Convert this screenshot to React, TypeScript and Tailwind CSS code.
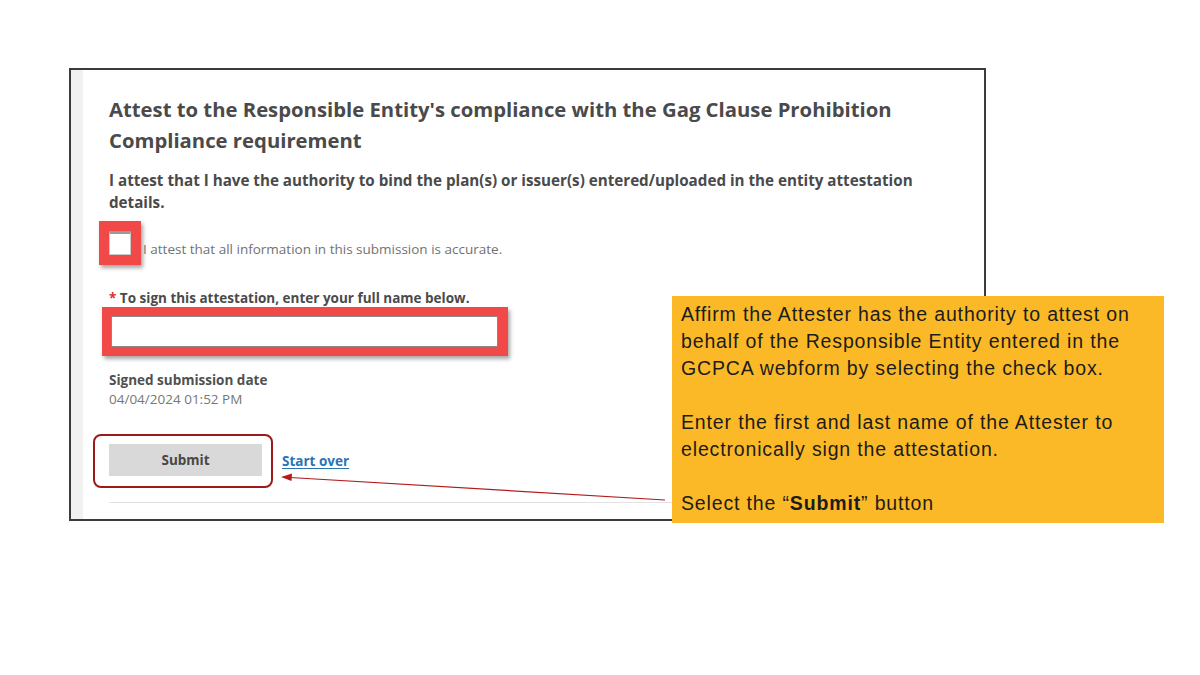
import React from 'react';

const Callout = () => (
    <div className="absolute left-[672px] top-[296px] w-[492px] h-[227px] bg-[#fbb927] pl-[9px] pt-[5px] text-[19.5px] leading-[27px] tracking-[0.85px] text-[#1c1c1c] font-['Liberation_Sans',sans-serif] whitespace-nowrap">
        <p>
            Affirm the Attester has the authority to attest on<br />
            behalf of the Responsible Entity entered in the<br />
            GCPCA webform by selecting the check box.
        </p>
        <p className="mt-[27px]">
            Enter the first and last name of the Attester to<br />
            electronically sign the attestation.
        </p>
        <p className="mt-[27px]">Select the “<span className="font-bold">Submit</span>” button</p>
    </div>
);

const Arrow = () => (
    <svg className="absolute left-0 top-0 pointer-events-none" width="1200" height="675" viewBox="0 0 1200 675">
        <line x1="665" y1="500" x2="290" y2="477.5" stroke="#b01c1c" strokeWidth="1.2" />
        <polygon points="281,477 292,473.5 291.5,481" fill="#b01c1c" />
    </svg>
);

export default function App() {
    return (
        <div className="relative w-[1200px] h-[675px] bg-white overflow-hidden pt-[68px] pl-[69px] font-['Open_Sans',sans-serif]">
            <div className="flex w-[917px] h-[453px] border-2 border-[#3b3b3b] bg-white">
                <div className="w-[12px] bg-[#f1f1f1] shrink-0" />
                <div className="flex-1 pl-[26px] pt-[24px]">
                    <h1 className="text-[20.3px] leading-[31px] font-bold text-[#4a4a4a] whitespace-nowrap">
                        Attest to the Responsible Entity's compliance with the Gag Clause Prohibition<br />
                        Compliance requirement
                    </h1>
                    <p className="mt-[13px] text-[15.2px] leading-[22px] font-bold text-[#4a4a4a] whitespace-nowrap">
                        I attest that I have the authority to bind the plan(s) or issuer(s) entered/uploaded in the entity attestation<br />
                        details.
                    </p>

                    <div className="flex items-start mt-[8px] -ml-[10px]">
                        <div className="w-[42px] h-[44px] bg-[#f14848] p-[10px] shadow-[2px_3px_4px_rgba(0,0,0,0.35)]">
                            <div className="w-full h-full bg-white border border-[#c8c8c8] border-t-[3px] border-t-[#9a9a9a]" />
                        </div>
                        <span className="pt-[19px] pl-[2px] text-[13.5px] leading-[18px] text-[#727272]">
                            I attest that all information in this submission is accurate.
                        </span>
                    </div>

                    <p className="mt-[24px] text-[13.5px] leading-[18px] font-bold text-[#4a4a4a]">
                        <span className="text-[#d9342b]">*</span> To sign this attestation, enter your full name below.
                    </p>
                    <div className="-ml-[7px] w-[406px] h-[49px] bg-[#f14848] p-[9px] pr-[10px] shadow-[2px_3px_4px_rgba(0,0,0,0.35)]">
                        <div className="w-full h-full bg-white border border-[#8a8a8a]" />
                    </div>

                    <p className="mt-[15px] text-[13.5px] leading-[19px] font-bold text-[#505050]">Signed submission date</p>
                    <p className="text-[13.5px] leading-[19px] text-[#777777]">04/04/2024 01:52 PM</p>

                    <div className="flex items-center mt-[25px] -ml-[16px]">
                        <div className="w-[180px] h-[54px] border-2 border-[#9b1b1b] rounded-[8px] pl-[14px] pt-[8px]">
                            <button className="w-[153px] h-[32px] bg-[#d9d9d9] text-[13.5px] font-bold text-[#474747]">Submit</button>
                        </div>
                        <a className="ml-[9px] text-[13.5px] font-bold text-[#2a73b6] underline underline-offset-2">Start over</a>
                    </div>

                    <div className="mt-[14px] w-[852px] h-px bg-[#e2e2e2]" />
                </div>
            </div>
            <Arrow />
            <Callout />
        </div>
    );
}
